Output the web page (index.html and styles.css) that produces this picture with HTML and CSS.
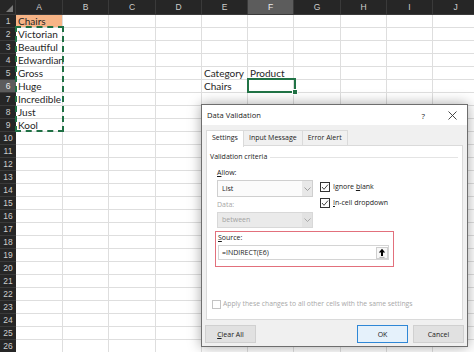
FILE: index.html
```html
<!DOCTYPE html>
<html lang="en">
<head>
    <meta charset="UTF-8">
    <meta name="viewport" content="width=device-width, initial-scale=1.0">
    <title>Data Validation</title>
    <link rel="stylesheet" href="styles.css">
</head>
<body>
    <div class="sheet-wrap">
        <table class="sheet">
            <colgroup>
                <col class="col-rh">
                <col class="col-w47"><col class="col-w46"><col class="col-w47"><col class="col-w46"><col class="col-w46">
                <col class="col-w46"><col class="col-w47"><col class="col-w46"><col class="col-w46"><col class="col-w46">
            </colgroup>
            <tr class="col-heads">
                <th class="corner"><svg width="16" height="14" viewBox="0 0 16 14"><polygon points="13,5 13,12 6,12" fill="#7a7a7a"/></svg></th>
                <th>A</th><th>B</th><th>C</th><th>D</th><th>E</th><th class="active">F</th><th>G</th><th>H</th><th>I</th><th>J</th>
            </tr>
            <tr><th>1</th><td class="accent">Chairs</td><td></td><td></td><td></td><td></td><td></td><td></td><td></td><td></td><td></td></tr>
            <tr><th>2</th><td>Victorian</td><td></td><td></td><td></td><td></td><td></td><td></td><td></td><td></td><td></td></tr>
            <tr><th>3</th><td>Beautiful</td><td></td><td></td><td></td><td></td><td></td><td></td><td></td><td></td><td></td></tr>
            <tr><th>4</th><td>Edwardian</td><td></td><td></td><td></td><td></td><td></td><td></td><td></td><td></td><td></td></tr>
            <tr><th>5</th><td>Gross</td><td></td><td></td><td></td><td>Category</td><td>Product</td><td></td><td></td><td></td><td></td></tr>
            <tr><th class="active">6</th><td>Huge</td><td></td><td></td><td></td><td>Chairs</td><td></td><td></td><td></td><td></td><td></td></tr>
            <tr><th>7</th><td>Incredible</td><td></td><td></td><td></td><td></td><td></td><td></td><td></td><td></td><td></td></tr>
            <tr><th>8</th><td>Just</td><td></td><td></td><td></td><td></td><td></td><td></td><td></td><td></td><td></td></tr>
            <tr><th>9</th><td>Kool</td><td></td><td></td><td></td><td></td><td></td><td></td><td></td><td></td><td></td></tr>
            <tr><th>10</th><td></td><td></td><td></td><td></td><td></td><td></td><td></td><td></td><td></td><td></td></tr>
            <tr><th>11</th><td></td><td></td><td></td><td></td><td></td><td></td><td></td><td></td><td></td><td></td></tr>
            <tr><th>12</th><td></td><td></td><td></td><td></td><td></td><td></td><td></td><td></td><td></td><td></td></tr>
            <tr><th>13</th><td></td><td></td><td></td><td></td><td></td><td></td><td></td><td></td><td></td><td></td></tr>
            <tr><th>14</th><td></td><td></td><td></td><td></td><td></td><td></td><td></td><td></td><td></td><td></td></tr>
            <tr><th>15</th><td></td><td></td><td></td><td></td><td></td><td></td><td></td><td></td><td></td><td></td></tr>
            <tr><th>16</th><td></td><td></td><td></td><td></td><td></td><td></td><td></td><td></td><td></td><td></td></tr>
            <tr><th>17</th><td></td><td></td><td></td><td></td><td></td><td></td><td></td><td></td><td></td><td></td></tr>
            <tr><th>18</th><td></td><td></td><td></td><td></td><td></td><td></td><td></td><td></td><td></td><td></td></tr>
            <tr><th>19</th><td></td><td></td><td></td><td></td><td></td><td></td><td></td><td></td><td></td><td></td></tr>
            <tr><th>20</th><td></td><td></td><td></td><td></td><td></td><td></td><td></td><td></td><td></td><td></td></tr>
            <tr><th>21</th><td></td><td></td><td></td><td></td><td></td><td></td><td></td><td></td><td></td><td></td></tr>
            <tr><th>22</th><td></td><td></td><td></td><td></td><td></td><td></td><td></td><td></td><td></td><td></td></tr>
            <tr><th>23</th><td></td><td></td><td></td><td></td><td></td><td></td><td></td><td></td><td></td><td></td></tr>
            <tr><th>24</th><td></td><td></td><td></td><td></td><td></td><td></td><td></td><td></td><td></td><td></td></tr>
            <tr><th>25</th><td></td><td></td><td></td><td></td><td></td><td></td><td></td><td></td><td></td><td></td></tr>
            <tr><th>26</th><td></td><td></td><td></td><td></td><td></td><td></td><td></td><td></td><td></td><td></td></tr>
        </table>

        <!-- copy marquee around A2:A9 and the active cell F6 -->
        <div class="marquee"></div>
        <div class="selection"><span class="handle"></span></div>
    </div>

    <!-- Data Validation dialog -->
    <div class="dialog">
        <div class="dlg-title">
            <span class="dlg-name">Data Validation</span>
            <span class="dlg-help">?</span>
            <svg class="dlg-close" width="9" height="9" viewBox="0 0 9 9"><path d="M0.5 0.5 L8.5 8.5 M8.5 0.5 L0.5 8.5" stroke="#333" stroke-width="0.9"/></svg>
        </div>
        <div class="dlg-body">
            <div class="tabs">
                <span class="tab current">Settings</span>
                <span class="tab">Input Message</span>
                <span class="tab">Error Alert</span>
            </div>
            <div class="panel">
                <div class="group-title">Validation criteria</div>
                <div class="criteria">
                    <div class="col-left">
                        <div class="label"><u>A</u>llow:</div>
                        <div class="select">
                            <span class="value">List</span>
                            <span class="arrow"><svg width="7" height="4" viewBox="0 0 7 4"><polyline points="0.5,0.5 3.5,3.5 6.5,0.5" fill="none" stroke="#8a8a8a" stroke-width="0.8"/></svg></span>
                        </div>
                        <div class="label disabled">Data:</div>
                        <div class="select disabled">
                            <span class="value">between</span>
                            <span class="arrow"><svg width="7" height="4" viewBox="0 0 7 4"><polyline points="0.5,0.5 3.5,3.5 6.5,0.5" fill="none" stroke="#9a9a9a" stroke-width="0.8"/></svg></span>
                        </div>
                    </div>
                    <div class="col-right">
                        <div class="check">
                            <svg width="10" height="10" viewBox="0 0 10 10"><rect x="0.5" y="0.5" width="9" height="9" fill="#fff" stroke="#333"/><path d="M2 5 L4 7.3 L8 2.6" fill="none" stroke="#333" stroke-width="0.9"/></svg>
                            <span>Ignore <u>b</u>lank</span>
                        </div>
                        <div class="check">
                            <svg width="10" height="10" viewBox="0 0 10 10"><rect x="0.5" y="0.5" width="9" height="9" fill="#fff" stroke="#333"/><path d="M2 5 L4 7.3 L8 2.6" fill="none" stroke="#333" stroke-width="0.9"/></svg>
                            <span><u>I</u>n-cell dropdown</span>
                        </div>
                    </div>
                </div>
                <div class="source">
                    <div class="label"><u>S</u>ource:</div>
                    <div class="ref-input">
                        <span class="value">=INDIRECT(E6)</span>
                        <span class="ref-btn"><svg width="10" height="10" viewBox="0 0 10 10"><path d="M5 0.8 L1.8 4.4 H4 V8 H6 V4.4 H8.2 Z" fill="#000"/><path d="M2.5 9.4 H7.5" stroke="#999" stroke-width="0.8"/></svg></span>
                    </div>
                </div>
                <div class="check apply">
                    <svg width="9" height="9" viewBox="0 0 9 9"><rect x="0.5" y="0.5" width="8" height="8" fill="#fff" stroke="#c4c4c4"/></svg>
                    <span>Apply these changes to all other cells with the same settings</span>
                </div>
            </div>
        </div>
        <div class="dlg-footer">
            <button class="btn"><u>C</u>lear All</button>
            <span class="spacer"></span>
            <button class="btn primary">OK</button>
            <button class="btn">Cancel</button>
        </div>
    </div>
</body>
</html>
```

FILE: styles.css
```css
body {
    margin: 0;
    background-color: white;
    overflow: hidden;
    font-family: Lato, "Liberation Sans", sans-serif;
}
.sheet-wrap {
    position: relative;
}
.sheet {
    border-collapse: separate;
    border-spacing: 0;
    table-layout: fixed;
    width: 479px;
}
.col-rh { width: 16px; }
.col-w47 { width: 47px; }
.col-w46 { width: 46px; }
.sheet tr {
    height: 13px;
}
.sheet tr.col-heads {
    height: 14px;
}
.sheet th, .sheet td {
    padding: 0;
    white-space: nowrap;
}
.sheet td {
    border-right: 1px solid #dedede;
    border-bottom: 1px solid #dedede;
    font-size: 10px;
    line-height: 12px;
    color: #262626;
    padding-left: 2px;
}
.sheet th {
    background-color: #262626;
    color: #cdcdcd;
    font-family: "Liberation Sans", sans-serif;
    font-weight: normal;
    font-size: 8.5px;
    line-height: 12px;
    border-bottom: 1px solid #3a3a3a;
}
.col-heads th {
    border-right: 1px solid #3a3a3a;
    line-height: 13px;
}
.col-heads th.corner {
    padding: 0;
    line-height: 0;
}
.sheet th.active {
    background-color: #5c5c5c;
    color: #ececec;
}
.sheet td.accent {
    background-color: #f7b486;
}
.marquee {
    position: absolute;
    left: 15px;
    top: 26px;
    width: 49px;
    height: 106px;
    box-sizing: border-box;
    border: 2px dashed #1f7044;
}
.selection {
    position: absolute;
    left: 247px;
    top: 78px;
    width: 49px;
    height: 15px;
    box-sizing: border-box;
    border: 2px solid #217346;
}
.selection .handle {
    position: absolute;
    right: -4px;
    bottom: -4px;
    width: 4px;
    height: 4px;
    background-color: #217346;
    border: 1px solid white;
}

/* dialog */
.dialog {
    position: absolute;
    left: 201px;
    top: 104px;
    width: 267px;
    height: 243px;
    box-sizing: border-box;
    border: 1px solid #6e6e6e;
    background-color: #f0f0f0;
    box-shadow: 0 0 12px rgba(0, 0, 0, 0.35);
    display: flex;
    flex-direction: column;
    font-family: "Open Sans", sans-serif;
    font-size: 7px;
    color: #1a1a1a;
}
.dlg-title {
    height: 20px;
    background-color: white;
    display: flex;
    align-items: center;
    padding: 0 10px 0 5px;
}
.dlg-name {
    flex: 1;
    font-size: 7.6px;
}
.dlg-help {
    font-size: 8px;
    margin-right: 23px;
}
.dlg-body {
    padding: 5px 4px 0;
}
.tabs {
    display: flex;
    height: 15px;
}
.tab {
    padding: 0 5px;
    line-height: 14px;
    border: 1px solid #dadada;
    border-bottom: none;
    border-left: none;
    background-color: #f0f0f0;
}
.tab.current {
    background-color: white;
    border-left: 1px solid #dadada;
    position: relative;
    z-index: 1;
    height: 16px;
}
.panel {
    height: 175px;
    box-sizing: border-box;
    background-color: white;
    border: 1px solid #dadada;
    padding: 0 4px 10px 3px;
    display: flex;
    flex-direction: column;
}
.group-title {
    margin-top: 6px;
    line-height: 10px;
    display: flex;
    align-items: center;
    gap: 3px;
}
.group-title::after {
    content: "";
    flex: 1;
    height: 1px;
    background-color: #e4e4e4;
}
.criteria {
    display: flex;
    margin: 6px 0 0 7px;
}
.col-left {
    width: 96px;
}
.label {
    line-height: 10px;
}
.label.disabled {
    color: #a6a6a6;
    margin-top: 3px;
}
.select {
    display: flex;
    height: 17px;
    margin-top: 2px;
    box-sizing: border-box;
    border: 1px solid #cfcfcf;
    background-color: #fbfbfb;
}
.select .value {
    flex: 1;
    padding-left: 4px;
    line-height: 15px;
}
.select .arrow {
    width: 10px;
    background-color: #e8e8e8;
    display: flex;
    align-items: center;
    justify-content: center;
}
.select.disabled {
    height: 16px;
    background-color: #eaeaea;
    border-color: #d8d8d8;
    color: #a3a3a3;
}
.select.disabled .value {
    line-height: 14px;
}
.select.disabled .arrow {
    background-color: #e2e2e2;
}
.col-right {
    margin-left: 7px;
    padding-top: 14px;
    display: flex;
    flex-direction: column;
    gap: 6px;
}
.check {
    display: flex;
    align-items: center;
    gap: 3px;
    line-height: 10px;
}
.source {
    width: 179px;
    box-sizing: border-box;
    margin: 3px 0 0 5px;
    border: 1px solid #e2707c;
    padding: 1px 4px 6px 2px;
}
.ref-input {
    display: flex;
    align-items: center;
    height: 15px;
    margin-top: 2px;
    box-sizing: border-box;
    border: 1px solid #d4d4d4;
}
.ref-input .value {
    flex: 1;
    padding-left: 3px;
}
.ref-btn {
    width: 12px;
    height: 12px;
    box-sizing: border-box;
    border: 1px solid #cfcfcf;
    background-color: #f7f7f7;
    display: flex;
    align-items: center;
    justify-content: center;
}
.check.apply {
    margin: auto 0 0 2px;
    gap: 2px;
    color: #a8a8a8;
    font-size: 6.8px;
}
.dlg-footer {
    display: flex;
    padding: 5px 3px 0;
    gap: 5px;
}
.spacer {
    flex: 1;
}
.btn {
    width: 51px;
    height: 18px;
    padding: 0;
    font-family: "Open Sans", sans-serif;
    font-size: 7px;
    color: #1a1a1a;
    background-color: #e1e1e1;
    border: 1px solid #d0d0d0;
}
.btn.primary {
    border: 1px solid #2f87d6;
    background-color: #e5f1fb;
}
```
